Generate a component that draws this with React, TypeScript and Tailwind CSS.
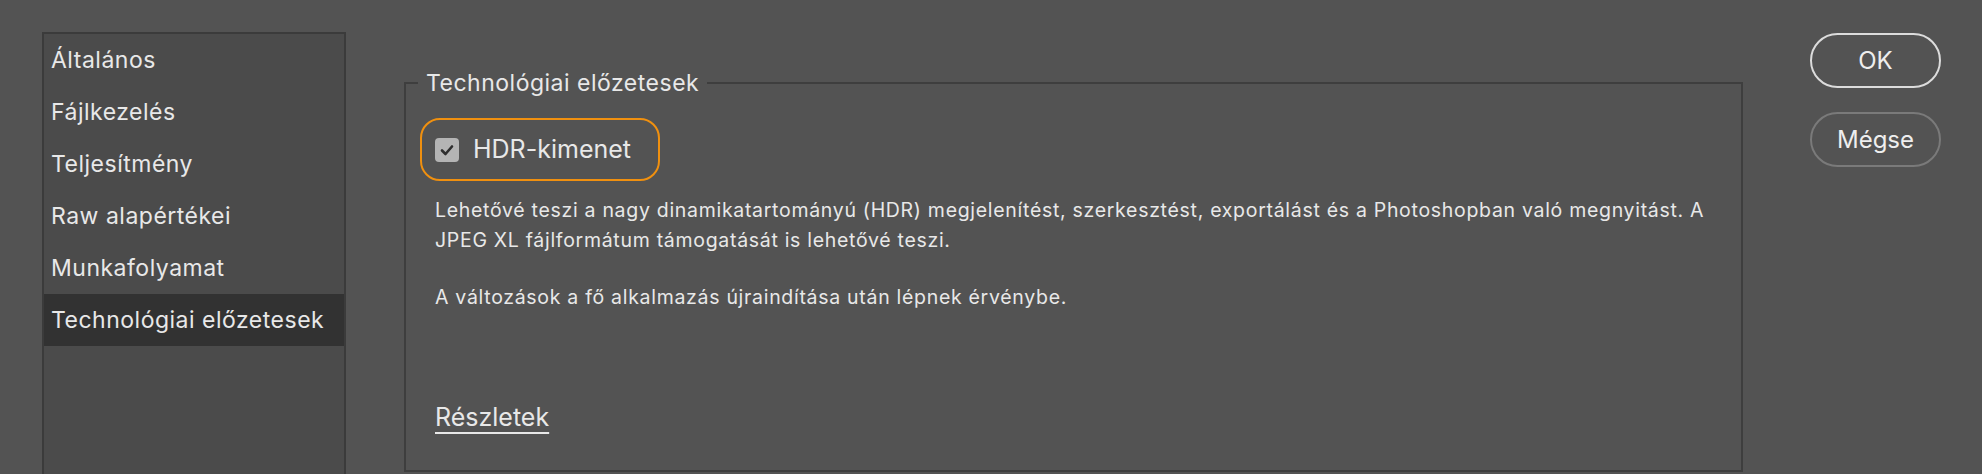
import React from "react";

const items = [
  "Általános",
  "Fájlkezelés",
  "Teljesítmény",
  "Raw alapértékei",
  "Munkafolyamat",
  "Technológiai előzetesek",
];

export default function App() {
  return (
    <div className="w-[1982px] h-[474px] overflow-hidden bg-[#535353] flex text-[#e8e8e8] font-['Inter','Noto_Sans',sans-serif]">
      <div className="ml-[42px] mt-[32px] w-[304px] h-[460px] shrink-0 border-2 border-[#3b3b3b] bg-[#4b4b4b]">
        {items.map((it, i) => (
          <div
            key={it}
            className={`h-[52px] flex items-center pl-[7px] text-[23px] tracking-[0.5px] ${
              i === items.length - 1 ? "bg-[#323232]" : ""
            }`}
          >
            {it}
          </div>
        ))}
      </div>

      <fieldset className="ml-[58px] mt-[68px] w-[1339px] h-[404px] shrink-0 border-2 border-[#3e3e3e] pt-[20px]">
        <legend className="ml-[12px] px-[8px] text-[23px] tracking-[0.5px] leading-[30px]">Technológiai előzetesek</legend>
        <div className="ml-[14px] inline-flex items-center h-[63px] w-[240px] rounded-[20px] border-2 border-[#f0900f] pl-[13px]">
          <span className="w-[24px] h-[24px] rounded-[4px] bg-[#b4b4b4] flex items-center justify-center">
            <svg width="16" height="16" viewBox="0 0 16 16">
              <path d="M3 8.5 L6.5 12 L13 4.5" fill="none" stroke="#2e2e2e" strokeWidth="2.6" strokeLinecap="round" strokeLinejoin="round" />
            </svg>
          </span>
          <span className="ml-[14px] text-[25px] leading-none">HDR-kimenet</span>
        </div>
        <div className="mt-[14px] ml-[29px] text-[19.5px] leading-[30px] tracking-[0.7px]">
          <p>
            Lehetővé teszi a nagy dinamikatartományú (HDR) megjelenítést, szerkesztést, exportálást és a Photoshopban való megnyitást. A
            <br />
            JPEG XL fájlformátum támogatását is lehetővé teszi.
          </p>
          <p className="mt-[27px]">A változások a fő alkalmazás újraindítása után lépnek érvénybe.</p>
          <p className="mt-[90px] tracking-normal">
            <span className="underline underline-offset-[6px] decoration-[1.5px] text-[25px]">Részletek</span>
          </p>
        </div>
      </fieldset>

      <div className="ml-[67px] mt-[33px] flex flex-col gap-[24px]">
        <button className="w-[131px] h-[55px] rounded-full border-2 border-[#dcdcdc] text-[24px] text-[#eeeeee]">OK</button>
        <button className="w-[131px] h-[55px] rounded-full border-2 border-[#7a7a7a] text-[24px] text-[#eeeeee]">Mégse</button>
      </div>
    </div>
  );
}
